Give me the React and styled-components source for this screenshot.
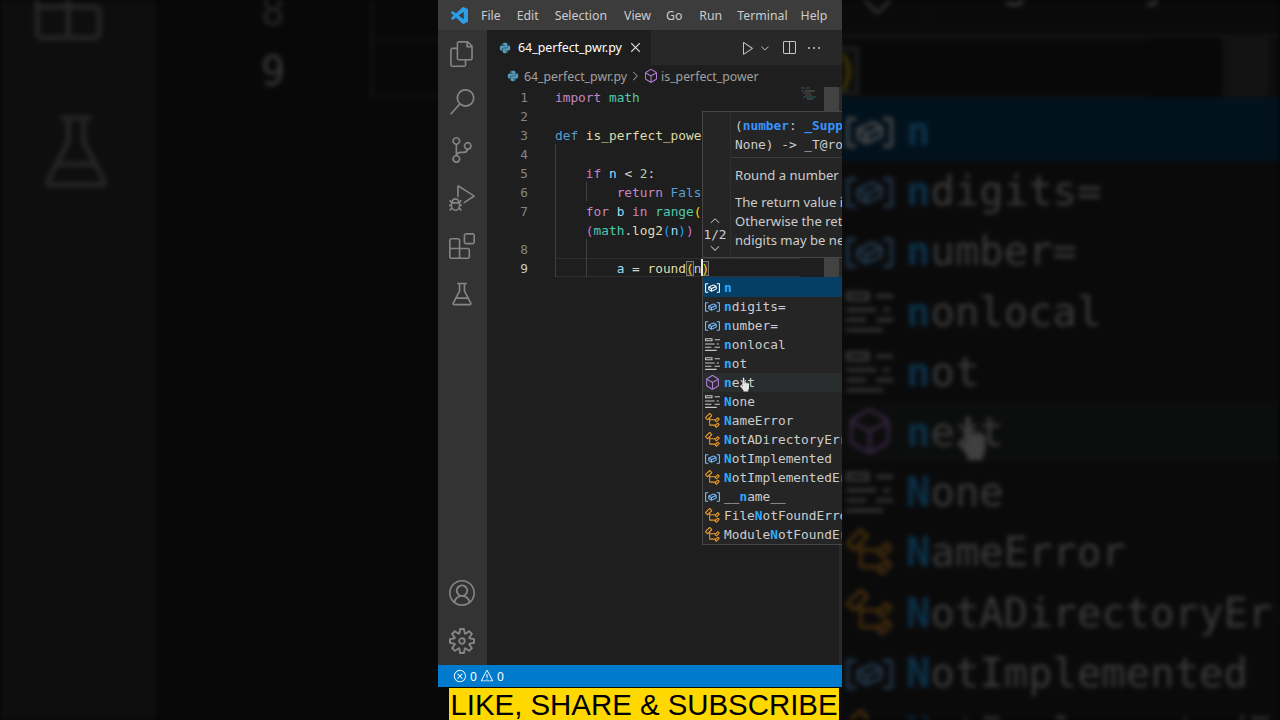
import React from 'react';
import styled, { createGlobalStyle } from 'styled-components';
import {
	VscFiles, VscSearch, VscSourceControl, VscDebugAlt, VscExtensions, VscBeaker, VscAccount,
	VscSettingsGear, VscSymbolVariable, VscSymbolKeyword, VscSymbolClass, VscSymbolMethod,
	VscPlay, VscChevronDown, VscChevronUp, VscChevronRight, VscSplitHorizontal, VscEllipsis,
	VscClose, VscError, VscWarning,
} from 'react-icons/vsc';
import { FaPython } from 'react-icons/fa';

const MONO = '"DejaVu Sans Mono", "Liberation Mono", monospace';
const UI = '"Noto Sans", "Open Sans", sans-serif';

const GlobalStyle = createGlobalStyle`
	html, body {
		margin: 0;
		background: #000000;
	}
`;

const Stage = styled.div`
	position: relative;
	width: 1280px;
	height: 720px;
	overflow: hidden;
	display: flex;
	justify-content: center;
	background: #050505;
`;

/* the blurred, darkened copy of the video behind the portrait clip */
const Backdrop = styled.div`
	position: absolute;
	inset: 0;
	overflow: hidden;
	filter: brightness(0.28) blur(2px);
`;

const BackdropScale = styled.div`
	width: 404px;
	transform-origin: 0 0;
	transform: translateY(-780px) scale(3.168);
`;

const Clip = styled.div`
	position: relative;
	width: 404px;
	height: 720px;
	flex: none;
	display: flex;
	flex-direction: column;
	overflow: hidden;
	filter: blur(0.35px);
`;

const Window = styled.div`
	flex: 1;
	min-height: 0;
	display: flex;
	flex-direction: column;
	background: #1e1e1e;
	overflow: hidden;
`;

const MenuBar = styled.div`
	height: 30px;
	flex: none;
	display: flex;
	align-items: center;
	background: #3c3c3c;
	color: #cccccc;
	font-family: ${UI};
	font-size: 12.3px;
`;

const LogoBox = styled.div`
	width: 43px;
	flex: none;
	display: flex;
	justify-content: center;
`;

const MenuItem = styled.span`
	margin-left: ${(p) => p.$gap}px;
`;

const Middle = styled.div`
	flex: 1;
	min-height: 0;
	display: flex;
`;

const ActivityBar = styled.div`
	width: 49px;
	flex: none;
	box-sizing: border-box;
	padding-right: 1px;
	display: flex;
	flex-direction: column;
	justify-content: space-between;
	background: #333333;
`;

const ActivityGroup = styled.div`
	display: flex;
	flex-direction: column;
`;

const ActivityIcon = styled.div`
	height: 48px;
	display: flex;
	align-items: center;
	justify-content: center;
	color: #858585;
	font-size: 26px;
`;

const Editor = styled.div`
	flex: 1;
	min-width: 0;
	display: flex;
	flex-direction: column;
`;

const TabBar = styled.div`
	height: 35px;
	flex: none;
	display: flex;
	align-items: center;
	justify-content: space-between;
	background: #282828;
`;

const Tab = styled.div`
	height: 100%;
	width: 164px;
	box-sizing: border-box;
	padding-left: 12px;
	display: flex;
	align-items: center;
	background: #1e1e1e;
	color: #ffffff;
	font-family: ${UI};
	font-size: 12.4px;
`;

const PyIcon = styled(FaPython)`
	color: #519aba;
	font-size: 12px;
	flex: none;
	margin-right: ${(p) => p.$gap}px;
`;

const TabClose = styled(VscClose)`
	font-size: 17px;
	margin-left: 5px;
	color: #e0e0e0;
`;

const TabActions = styled.div`
	display: flex;
	align-items: center;
	padding-right: 20px;
	color: #c5c5c5;
	font-size: 16px;
`;

const SmallChevron = styled(VscChevronDown)`
	font-size: 12px;
	margin: 0 10px 0 3px;
`;

const SplitIcon = styled(VscSplitHorizontal)`
	margin-right: 9px;
`;

const Crumbs = styled.div`
	height: 22px;
	flex: none;
	display: flex;
	align-items: center;
	padding-left: 20px;
	color: #a0a0a0;
	font-family: ${UI};
	font-size: 12.3px;
`;

const CrumbSep = styled(VscChevronRight)`
	font-size: 14px;
	margin: 0 1px;
`;

const CrumbSymbol = styled(VscSymbolMethod)`
	color: #b180d7;
	font-size: 16px;
	margin-right: 2px;
`;

const EditorBody = styled.div`
	position: relative;
	flex: 1;
	min-height: 0;
	display: flex;
`;

const Lines = styled.div`
	flex: 1;
	min-width: 0;
	font-family: ${MONO};
	font-size: 12.8px;
	line-height: 21px;
	white-space: pre;
`;

const Row = styled.div`
	height: 19px;
	display: flex;
`;

const Gutter = styled.div`
	width: 41px;
	flex: none;
	text-align: right;
	color: ${(p) => (p.$active ? '#c6c6c6' : '#858585')};
	margin-right: 27px;
`;

const Code = styled.div`
	position: relative;
	flex: 1;
	box-sizing: border-box;
	color: #d4d4d4;
	border-top: 1px solid ${(p) => (p.$active ? '#2f2f2f' : 'transparent')};
	border-bottom: 1px solid ${(p) => (p.$active ? '#2f2f2f' : 'transparent')};
	line-height: 19px;
`;

const Guide = styled.span`
	position: absolute;
	top: -1px;
	bottom: -1px;
	left: ${(p) => p.$level * 31}px;
	width: 1px;
	background: #404040;
`;

const Tok = styled.span`
	color: ${(p) => p.$c};
`;

const MatchBracket = styled.span`
	color: ${(p) => p.$c};
	box-shadow: inset 0 0 0 1px #777777;
	background: #2c2c2c;
`;

const Caret = styled.span`
	position: absolute;
	top: 0;
	bottom: 0;
	left: 146px;
	width: 1.5px;
	background: #e8e8e8;
`;

const Minimap = styled.div`
	width: 24px;
	flex: none;
`;

const Scrollbar = styled.div`
	width: 15px;
	flex: none;
	height: 190px;
	background: #424242;
`;

const EdgeStrip = styled.div`
	width: 3px;
	flex: none;
	background: #2a2a2a;
`;

const HoverCard = styled.div`
	position: absolute;
	left: 215px;
	top: 24px;
	width: 420px;
	height: 147px;
	box-sizing: border-box;
	display: flex;
	background: #252526;
	border: 1px solid #454545;
	color: #cccccc;
`;

const Overloads = styled.div`
	width: 24px;
	flex: none;
	padding-right: 3px;
	padding-bottom: 2px;
	display: flex;
	flex-direction: column;
	align-items: center;
	justify-content: flex-end;
	border-right: 1px solid #303031;
	font-family: ${MONO};
	font-size: 12.8px;
	line-height: 13px;
	color: #d0d0d0;
	svg {
		font-size: 14px;
	}
`;

const HoverBody = styled.div`
	flex: 1;
	min-width: 0;
`;

const Signature = styled.div`
	padding: 4px 0 3px 4px;
	border-bottom: 1px solid #3c3c3c;
	font-family: ${MONO};
	font-size: 12.8px;
	line-height: 19px;
	white-space: pre;
`;

const ParamName = styled.span`
	color: #3794ff;
	font-weight: 700;
`;

const Doc = styled.div`
	padding: 8px 0 0 4px;
	font-family: ${UI};
	font-size: 13.1px;
	line-height: 19px;
	white-space: pre;
`;

const DocPara = styled.div`
	margin-bottom: 8px;
`;

const SuggestList = styled.div`
	position: absolute;
	left: 215px;
	top: 190px;
	width: 420px;
	box-sizing: border-box;
	background: #252526;
	border: 1px solid #454545;
	border-top: none;
	font-family: ${MONO};
	font-size: 12.8px;
	line-height: 19px;
	white-space: pre;
	color: #cccccc;
`;

const SuggestRow = styled.div`
	height: ${(p) => (p.$selected ? 20 : 19)}px;
	display: flex;
	align-items: center;
	padding-left: 2px;
	background: ${(p) => (p.$selected ? '#063f66' : p.$hover ? '#2a2d2e' : 'transparent')};
	color: ${(p) => (p.$selected ? '#ffffff' : '#cccccc')};
`;

const KindIcon = styled.span`
	width: 19px;
	flex: none;
	display: flex;
	font-size: 17px;
	margin-left: -1px;
	margin-right: 1px;
	color: ${(p) => p.$c};
`;

const Hit = styled.span`
	color: #2aaaff;
	font-weight: 700;
`;

const PointerSvg = styled.svg`
	position: absolute;
	left: 253px;
	top: 290px;
	width: 10px;
	height: 15px;
	fill: #e6e6e6;
`;

const StatusBar = styled.div`
	height: 22px;
	flex: none;
	display: flex;
	align-items: center;
	padding-left: 15px;
	gap: 3px;
	background: #007acc;
	color: #ffffff;
	font-family: ${UI};
	font-size: 12px;
	svg {
		font-size: 14px;
	}
`;

const Banner = styled.div`
	height: 32px;
	flex: none;
	box-sizing: border-box;
	padding-top: 1px;
	margin: 1px 3px 0 11px;
	display: flex;
	align-items: center;
	justify-content: center;
	background: #ffd800;
	color: #000000;
	font-family: "Liberation Sans", Arial, sans-serif;
	font-size: 29.4px;
	white-space: nowrap;
`;

const KW = '#c586c0';
const TEAL = '#4ec9b0';
const BLUE = '#569cd6';
const FN = '#dcdcaa';
const VAR = '#9cdcfe';
const NUM = '#b5cea8';
const GOLD = '#ffd700';
const ORCHID = '#da70d6';
const SKY = '#179fff';
const TXT = '#d4d4d4';

// code stops where the hover card starts, the rest of each line is hidden in the video
const CODE = [
	{ num: 1, guides: [], toks: [['import', KW], [' ', TXT], ['math', TEAL]] },
	{ num: 2, guides: [], toks: [] },
	{ num: 3, guides: [], toks: [['def', BLUE], [' ', TXT], ['is_perfect_powe', FN]] },
	{ num: 4, guides: [0], toks: [] },
	{ num: 5, guides: [0], toks: [['    ', TXT], ['if', KW], [' ', TXT], ['n', VAR], [' < ', TXT], ['2', NUM], [':', TXT]] },
	{ num: 6, guides: [0, 1], toks: [['        ', TXT], ['return', KW], [' ', TXT], ['Fals', BLUE]] },
	{ num: 7, guides: [0], toks: [['    ', TXT], ['for', KW], [' ', TXT], ['b', VAR], [' ', TXT], ['in', KW], [' ', TXT], ['range', TEAL], ['(', GOLD]] },
	{ num: '', guides: [0], toks: [['    ', TXT], ['(', ORCHID], ['math', TEAL], ['.', TXT], ['log2', FN], ['(', SKY], ['n', VAR], [')', SKY], [')', ORCHID]] },
	{ num: 8, guides: [0, 1], toks: [] },
];

const SUGGESTIONS = [
	{ kind: 'var', pre: '', hit: 'n', post: '', selected: true },
	{ kind: 'var', pre: '', hit: 'n', post: 'digits=' },
	{ kind: 'var', pre: '', hit: 'n', post: 'umber=' },
	{ kind: 'key', pre: '', hit: 'n', post: 'onlocal' },
	{ kind: 'key', pre: '', hit: 'n', post: 'ot' },
	{ kind: 'fn', pre: '', hit: 'n', post: 'ext', hover: true },
	{ kind: 'key', pre: '', hit: 'N', post: 'one' },
	{ kind: 'cls', pre: '', hit: 'N', post: 'ameError' },
	{ kind: 'cls', pre: '', hit: 'N', post: 'otADirectoryError' },
	{ kind: 'var', pre: '', hit: 'N', post: 'otImplemented' },
	{ kind: 'cls', pre: '', hit: 'N', post: 'otImplementedError' },
	{ kind: 'var', pre: '__', hit: 'n', post: 'ame__' },
	{ kind: 'cls', pre: 'File', hit: 'N', post: 'otFoundError' },
	{ kind: 'cls', pre: 'Module', hit: 'N', post: 'otFoundError' },
];

const KINDS = {
	var: { Icon: VscSymbolVariable, color: '#75beff' },
	key: { Icon: VscSymbolKeyword, color: '#c5c5c5' },
	fn: { Icon: VscSymbolMethod, color: '#b180d7' },
	cls: { Icon: VscSymbolClass, color: '#ee9d28' },
};

const MENUS = [
	['File', 0],
	['Edit', 16],
	['Selection', 16],
	['View', 17],
	['Go', 15],
	['Run', 17],
	['Terminal', 15],
	['Help', 13],
];

const VsLogo = () => (
	<svg width="17" height="17" viewBox="0 0 24 24" fill="#2c9fe6">
		<path d="M23.15 2.587L18.21.21a1.494 1.494 0 0 0-1.705.29l-9.46 8.63-4.12-3.128a.999.999 0 0 0-1.276.057L.327 7.261A1 1 0 0 0 .326 8.74L3.899 12 .326 15.26a1 1 0 0 0 .001 1.479L1.65 17.94a.999.999 0 0 0 1.276.057l4.12-3.128 9.46 8.63a1.492 1.492 0 0 0 1.704.29l4.942-2.377A1.5 1.5 0 0 0 24 20.06V3.939a1.5 1.5 0 0 0-.85-1.352zm-5.146 14.861L10.826 12l7.178-5.448v10.896z" />
	</svg>
);

const MinimapDrawing = () => (
	<svg width="18" height="15" viewBox="0 0 18 15">
		<g strokeWidth="0.7" opacity="0.5">
			<path d="M1 1h4" stroke="#c586c0" />
			<path d="M6 1h4" stroke="#4ec9b0" />
			<path d="M1 4h3" stroke="#569cd6" />
			<path d="M5 4h10" stroke="#dcdcaa" />
			<path d="M3 6h8" stroke="#9a9a9a" />
			<path d="M5 8h7" stroke="#c586c0" />
			<path d="M3 10h13" stroke="#4ec9b0" />
			<path d="M7 12h6" stroke="#9cdcfe" />
		</g>
	</svg>
);

// the mouse pointer caught in the video, hovering the "next" row
const HandPointer = () => (
	<PointerSvg viewBox="0 0 10 15">
		<path d="M2.8 1.2c0-.9 1.5-.9 1.5 0V6.5h.6V5.6c0-.7 1.2-.7 1.2 0v.9h.5v-.6c0-.7 1.1-.7 1.1 0v.8h.3c0-.6 1-.6 1 0V11c0 1-.5 1.6-.8 2.2v1.3H3.4v-1.2C2.6 12 1.4 10.6.6 9.4c-.4-.7.5-1.4 1-.9l1.2 1.2z" />
	</PointerSvg>
);

const VsCodeClip = () => (
	<Clip>
		<Window>
			<MenuBar>
				<LogoBox><VsLogo /></LogoBox>
				{MENUS.map(([label, gap]) => (
					<MenuItem key={label} $gap={gap}>{label}</MenuItem>
				))}
			</MenuBar>
			<Middle>
				<ActivityBar>
					<ActivityGroup>
						<ActivityIcon><VscFiles /></ActivityIcon>
						<ActivityIcon><VscSearch /></ActivityIcon>
						<ActivityIcon><VscSourceControl /></ActivityIcon>
						<ActivityIcon><VscDebugAlt /></ActivityIcon>
						<ActivityIcon><VscExtensions /></ActivityIcon>
						<ActivityIcon><VscBeaker /></ActivityIcon>
					</ActivityGroup>
					<ActivityGroup>
						<ActivityIcon><VscAccount /></ActivityIcon>
						<ActivityIcon><VscSettingsGear /></ActivityIcon>
					</ActivityGroup>
				</ActivityBar>
				<Editor>
					<TabBar>
						<Tab>
							<PyIcon $gap={7} />
							64_perfect_pwr.py
							<TabClose />
						</Tab>
						<TabActions>
							<VscPlay />
							<SmallChevron />
							<SplitIcon />
							<VscEllipsis />
						</TabActions>
					</TabBar>
					<Crumbs>
						<PyIcon $gap={5} />
						64_perfect_pwr.py
						<CrumbSep />
						<CrumbSymbol />
						is_perfect_power
					</Crumbs>
					<EditorBody>
						<Lines>
							{CODE.map((line, i) => (
								<Row key={i}>
									<Gutter>{line.num}</Gutter>
									<Code>
										{line.guides.map((g) => <Guide key={g} $level={g} />)}
										{line.toks.map(([text, color], j) => (
											<Tok key={j} $c={color}>{text}</Tok>
										))}
									</Code>
								</Row>
							))}
							<Row>
								<Gutter $active>9</Gutter>
								<Code $active>
									<Guide $level={0} />
									<Guide $level={1} />
									<Tok $c={TXT}>{'        '}</Tok>
									<Tok $c={VAR}>a</Tok>
									<Tok $c={TXT}> = </Tok>
									<Tok $c={FN}>round</Tok>
									<MatchBracket $c={GOLD}>(</MatchBracket>
									<Tok $c={VAR}>n</Tok>
									<MatchBracket $c={GOLD}>)</MatchBracket>
									<Caret />
								</Code>
							</Row>
						</Lines>
						<Minimap><MinimapDrawing /></Minimap>
						<Scrollbar />
						<EdgeStrip />
						<HoverCard>
							<Overloads>
								<VscChevronUp />
								1/2
								<VscChevronDown />
							</Overloads>
							<HoverBody>
								<Signature>
									(<ParamName>number</ParamName>: <ParamName>_SupportsRound1</ParamName>
									{'\n'}None) -&gt; _T@round
								</Signature>
								<Doc>
									<DocPara>Round a number to a given precision in decimal digits.</DocPara>
									The return value is an integer if ndigits is omitted{'\n'}
									Otherwise the return value has the same type{'\n'}
									ndigits may be negative.
								</Doc>
							</HoverBody>
						</HoverCard>
						<SuggestList>
							{SUGGESTIONS.map((s) => {
								const { Icon, color } = KINDS[s.kind];
								return (
									<SuggestRow key={s.pre + s.hit + s.post} $selected={s.selected} $hover={s.hover}>
										<KindIcon $c={s.selected ? '#ffffff' : color}><Icon /></KindIcon>
										{s.pre}<Hit>{s.hit}</Hit>{s.post}
									</SuggestRow>
								);
							})}
						</SuggestList>
						<HandPointer />
					</EditorBody>
				</Editor>
			</Middle>
			<StatusBar>
				<VscError />
				<span>0</span>
				<VscWarning />
				<span>0</span>
			</StatusBar>
		</Window>
		<Banner>LIKE, SHARE &amp; SUBSCRIBE</Banner>
	</Clip>
);

const App = () => (
	<>
		<GlobalStyle />
		<Stage>
			<Backdrop aria-hidden="true">
				<BackdropScale>
					<VsCodeClip />
				</BackdropScale>
			</Backdrop>
			<VsCodeClip />
		</Stage>
	</>
);

export default App;
